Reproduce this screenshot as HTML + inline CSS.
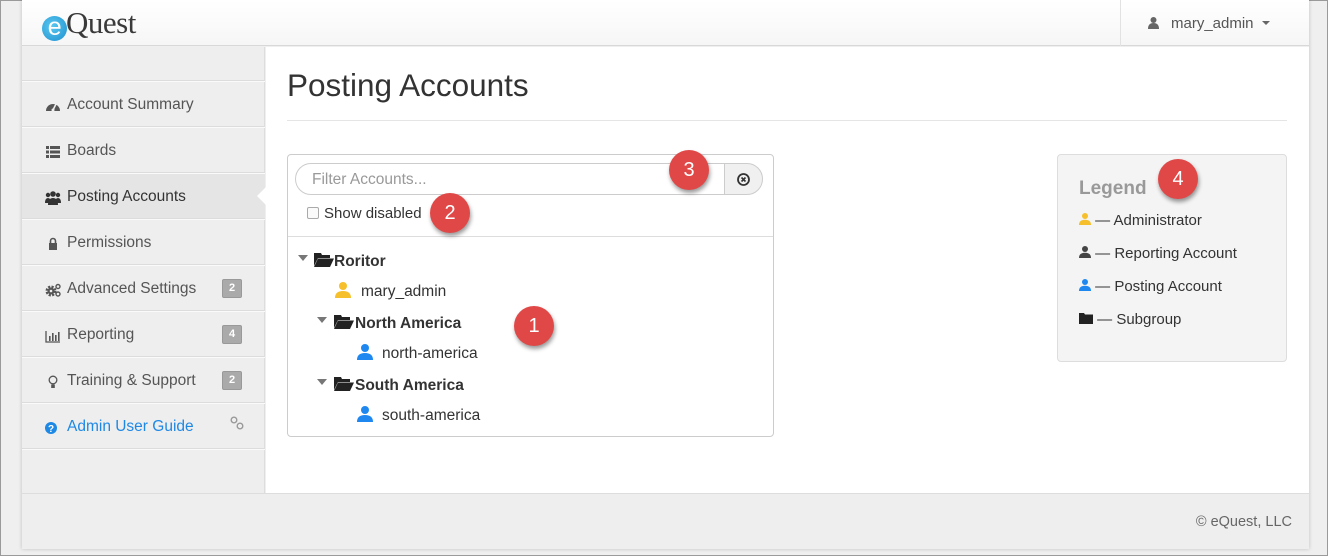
<!DOCTYPE html>
<html><head><style>
*{box-sizing:border-box;margin:0;padding:0}
body{width:1328px;height:556px;background:#efefef;font-family:"Liberation Sans",Helvetica,Arial,sans-serif;position:relative;overflow:hidden;border:1px solid #9a9a9a}
.frame{position:absolute;left:21px;top:-1px;width:1287px;height:549px;box-shadow:0 0 4px rgba(0,0,0,.2)}
.nav{position:absolute;left:0;top:0;width:1287px;height:46px;background:linear-gradient(#fff,#f6f6f6);border-bottom:1px solid #d8d8d8}
.logo{position:absolute;left:20px;top:5px;font-family:"Liberation Serif",serif;font-size:31px;color:#3a3a3a;letter-spacing:-.5px}
.logo b{display:inline-block;width:25px;height:25px;border-radius:50%;background:radial-gradient(circle at 40% 40%,#5ac8f0,#1d8fcf);color:#fff;font-weight:normal;text-align:center;line-height:22px;font-family:"Liberation Sans",sans-serif;font-size:25px;vertical-align:-2px;margin-right:-1px}
.user{position:absolute;left:1098px;top:0;width:189px;height:46px;border-left:1px solid #e2e2e2;font-size:15px;color:#555;padding:15px 0 0 50px}
.side{position:absolute;left:0;top:47px;width:243px;height:446px;background:#eeeeee;border-right:1px solid #ddd}
.item{position:absolute;left:0;width:243px;height:46px;border-top:1px solid #dcdcdc;box-shadow:inset 0 1px 0 #fafafa;font-size:15.5px;color:#555;padding:15px 0 0 45px}
.item.act{background:#e5e5e5;color:#333}
.item .ic{position:absolute;left:23px;top:18px;width:16px;height:14px}
.badge{position:absolute;left:200px;top:14px;width:20px;height:19px;background:#aaa;border:1px solid #999;border-radius:2px;color:#fff;font-size:11px;font-weight:bold;text-align:center;line-height:17px}
.main{position:absolute;left:244px;top:47px;width:1043px;height:446px;background:#fff}
h1{position:absolute;left:21px;top:20px;font-size:31.5px;font-weight:normal;color:#333}
.hr{position:absolute;left:21px;top:73px;width:1000px;border-top:1px solid #e5e5e5}
.panel{position:absolute;left:21px;top:107px;width:487px;height:283px;border:1px solid #ccc;border-radius:4px}
.inp{position:absolute;left:7px;top:8px;width:430px;height:32px;border:1px solid #ccc;border-radius:16px 0 0 16px;font-size:15.5px;color:#999;padding:7px 0 0 16px}
.btn{position:absolute;left:436px;top:8px;width:39px;height:32px;border:1px solid #ccc;border-radius:0 16px 16px 0;background:#f0f0f0}
.chk{position:absolute;left:19px;top:50px;font-size:15px;color:#333}
.chk i{display:inline-block;width:12px;height:12px;border:1px solid #aaa;border-radius:2px;vertical-align:-1px;margin-right:5px;background:#fafafa}
.sep{position:absolute;left:0;top:81px;width:485px;border-top:1px solid #ddd}
.t{position:absolute;font-size:15.5px;color:#333;white-space:nowrap}
.t.b{font-weight:bold}
.tri{position:absolute;width:0;height:0;border-left:5px solid transparent;border-right:5px solid transparent;border-top:6px solid #777}
.leg{position:absolute;left:791px;top:107px;width:230px;height:208px;background:#f4f4f4;border:1px solid #ddd;border-radius:4px}
.lt{position:absolute;left:21px;font-size:15px;color:#333}
.num{position:absolute;width:40px;height:40px;border-radius:50%;background:#e04848;color:#fff;font-size:20px;text-align:center;line-height:40px;box-shadow:1px 3px 4px rgba(0,0,0,.4)}
.foot{position:absolute;left:0;top:493px;width:1287px;height:56px;background:#eee;border-top:1px solid #ddd;font-size:14.5px;color:#666;text-align:right;padding:20px 17px 0 0}
</style></head><body>
<div class="frame">
<div class="nav"><div class="logo"><b>e</b>Quest</div>
<div class="user"><svg style="position:absolute;left:27px;top:17px" width="11" height="12" viewBox="0 0 11 12"><circle cx="5.5" cy="3" r="3" fill="#666"/><path d="M0 12 Q0 6 5.5 6 Q11 6 11 12Z" fill="#666"/></svg>mary_admin <span style="display:inline-block;border-left:4px solid transparent;border-right:4px solid transparent;border-top:4px solid #666;vertical-align:3px;margin-left:4px"></span></div></div>
<div class="side">
<div class="item" style="top:33px"><svg class="ic" viewBox="0 0 16 14"><path d="M1 12A7 7 0 1 1 15 12Z" fill="#555"/><path d="M8 11L11 5" stroke="#eee" stroke-width="1.6"/><circle cx="8" cy="11" r="1.5" fill="#eee"/></svg>Account Summary</div>
<div class="item" style="top:79px"><svg class="ic" viewBox="0 0 16 14"><g fill="#555"><rect x="1" y="1" width="3" height="3"/><rect x="5" y="1" width="10" height="3"/><rect x="1" y="5.5" width="3" height="3"/><rect x="5" y="5.5" width="10" height="3"/><rect x="1" y="10" width="3" height="3"/><rect x="5" y="10" width="10" height="3"/></g></svg>Boards</div>
<div class="item act" style="top:125px"><svg class="ic" viewBox="0 0 16 14"><circle cx="3" cy="4" r="2.2" fill="#333"/><circle cx="13" cy="4" r="2.2" fill="#333"/><circle cx="8" cy="3" r="2.8" fill="#333"/><path d="M0 12Q0 7 3 7Q6 7 6 12ZM10 12Q10 7 13 7Q16 7 16 12ZM3 14Q3 7 8 7Q13 7 13 14Z" fill="#333"/></svg>Posting Accounts<div style="position:absolute;right:-1px;top:14px;border-top:9px solid transparent;border-bottom:9px solid transparent;border-right:9px solid #fff"></div></div>
<div class="item" style="top:171px"><svg class="ic" viewBox="0 0 16 14"><rect x="4" y="6" width="8" height="7" fill="#555"/><path d="M5.5 6V4a2.5 2.5 0 0 1 5 0v2" stroke="#555" stroke-width="1.6" fill="none"/></svg>Permissions</div>
<div class="item" style="top:217px"><svg class="ic" viewBox="0 0 16 14"><circle cx="6" cy="8" r="4" fill="none" stroke="#555" stroke-width="3" stroke-dasharray="2 1.2"/><circle cx="6" cy="8" r="3.5" fill="#555"/><circle cx="6" cy="8" r="1.3" fill="#eee"/><circle cx="13" cy="3.5" r="2" fill="none" stroke="#555" stroke-width="1.4"/><circle cx="13" cy="11" r="2" fill="none" stroke="#555" stroke-width="1.4"/></svg>Advanced Settings<span class="badge">2</span></div>
<div class="item" style="top:263px"><svg class="ic" viewBox="0 0 16 14"><path d="M1 2V13H15" stroke="#555" fill="none" stroke-width="1.3"/><rect x="4" y="7" width="1.6" height="5" fill="#555"/><rect x="7" y="4" width="1.6" height="8" fill="#555"/><rect x="10" y="6" width="1.6" height="6" fill="#555"/><rect x="13" y="3" width="1.6" height="9" fill="#555"/></svg>Reporting<span class="badge">4</span></div>
<div class="item" style="top:309px"><svg class="ic" viewBox="0 0 16 14"><circle cx="8" cy="5" r="3.8" fill="none" stroke="#555" stroke-width="1.3"/><rect x="6.2" y="9.5" width="3.6" height="3.5" fill="#555"/></svg>Training &amp; Support<span class="badge">2</span></div>
<div class="item" style="top:355px;color:#1e88e5"><svg class="ic" viewBox="0 0 16 14"><circle cx="6" cy="7" r="6" fill="#1e88e5"/><text x="6" y="11" font-size="10" font-weight="bold" fill="#fff" text-anchor="middle" font-family="Liberation Sans">?</text></svg>Admin User Guide<svg style="position:absolute;left:208px;top:13px" width="14" height="14" viewBox="0 0 14 14"><circle cx="4" cy="4" r="2.8" fill="none" stroke="#999" stroke-width="1.4"/><circle cx="10" cy="10" r="2.8" fill="none" stroke="#999" stroke-width="1.4"/></svg></div>
<div class="item" style="top:401px;height:45px"></div>
</div>
<div class="main">
<h1>Posting Accounts</h1><div class="hr"></div>
<div class="panel">
<div class="inp">Filter Accounts...</div>
<div class="btn"><svg style="position:absolute;left:12px;top:9px" width="13" height="13" viewBox="0 0 13 13"><circle cx="6.5" cy="6.5" r="5.5" stroke="#333" stroke-width="1.8" fill="none"/><path d="M4.5 4.5L8.5 8.5M8.5 4.5L4.5 8.5" stroke="#333" stroke-width="1.6"/></svg></div>
<div class="chk"><i></i>Show disabled</div>
<div class="sep"></div>
<div class="tri" style="left:10px;top:100px"></div>
<svg style="position:absolute;left:26px;top:97px" width="20" height="15" viewBox="0 0 20 15"><path d="M0 1H7L8 3H16V6H4L0 14ZM4 6.5H20L16 15H0Z" fill="#222"/></svg>
<div class="t b" style="left:46px;top:98px">Roritor</div>
<svg style="position:absolute;left:47px;top:127px" width="16" height="16" viewBox="0 0 16 16"><circle cx="8" cy="4" r="4" fill="#f5c02c"/><path d="M0 16Q0 9 8 9Q16 9 16 16Z" fill="#f5c02c"/></svg>
<div class="t" style="left:73px;top:128px">mary_admin</div>
<div class="tri" style="left:29px;top:162px"></div>
<svg style="position:absolute;left:46px;top:159px" width="20" height="15" viewBox="0 0 20 15"><path d="M0 1H7L8 3H16V6H4L0 14ZM4 6.5H20L16 15H0Z" fill="#222"/></svg>
<div class="t b" style="left:67px;top:160px">North America</div>
<svg style="position:absolute;left:69px;top:189px" width="16" height="16" viewBox="0 0 16 16"><circle cx="8" cy="4" r="4" fill="#1e88f0"/><path d="M0 16Q0 9 8 9Q16 9 16 16Z" fill="#1e88f0"/></svg>
<div class="t" style="left:94px;top:190px">north-america</div>
<div class="tri" style="left:29px;top:224px"></div>
<svg style="position:absolute;left:46px;top:221px" width="20" height="15" viewBox="0 0 20 15"><path d="M0 1H7L8 3H16V6H4L0 14ZM4 6.5H20L16 15H0Z" fill="#222"/></svg>
<div class="t b" style="left:67px;top:222px">South America</div>
<svg style="position:absolute;left:69px;top:251px" width="16" height="16" viewBox="0 0 16 16"><circle cx="8" cy="4" r="4" fill="#1e88f0"/><path d="M0 16Q0 9 8 9Q16 9 16 16Z" fill="#1e88f0"/></svg>
<div class="t" style="left:94px;top:252px">south-america</div>
</div>
<div class="leg">
<div style="position:absolute;left:21px;top:23px;font-size:19px;font-weight:bold;color:#999">Legend</div>
<div class="lt" style="top:57px"><svg width="12" height="12" viewBox="0 0 16 16"><circle cx="8" cy="4" r="4" fill="#f5c02c"/><path d="M0 16Q0 9 8 9Q16 9 16 16Z" fill="#f5c02c"/></svg> — Administrator</div>
<div class="lt" style="top:90px"><svg width="12" height="12" viewBox="0 0 16 16"><circle cx="8" cy="4" r="4" fill="#444"/><path d="M0 16Q0 9 8 9Q16 9 16 16Z" fill="#444"/></svg> — Reporting Account</div>
<div class="lt" style="top:123px"><svg width="12" height="12" viewBox="0 0 16 16"><circle cx="8" cy="4" r="4" fill="#1e88f0"/><path d="M0 16Q0 9 8 9Q16 9 16 16Z" fill="#1e88f0"/></svg> — Posting Account</div>
<div class="lt" style="top:156px"><svg width="14" height="12" viewBox="0 0 14 12"><path d="M0 1H5L6 2.5H14V12H0Z" fill="#222"/></svg> — Subgroup</div>
</div>
<div class="num" style="left:248px;top:259px">1</div>
<div class="num" style="left:164px;top:146px">2</div>
<div class="num" style="left:403px;top:103px">3</div>
<div class="num" style="left:892px;top:112px">4</div>
</div>
<div class="foot">© eQuest, LLC</div>
</div>
</body></html>
